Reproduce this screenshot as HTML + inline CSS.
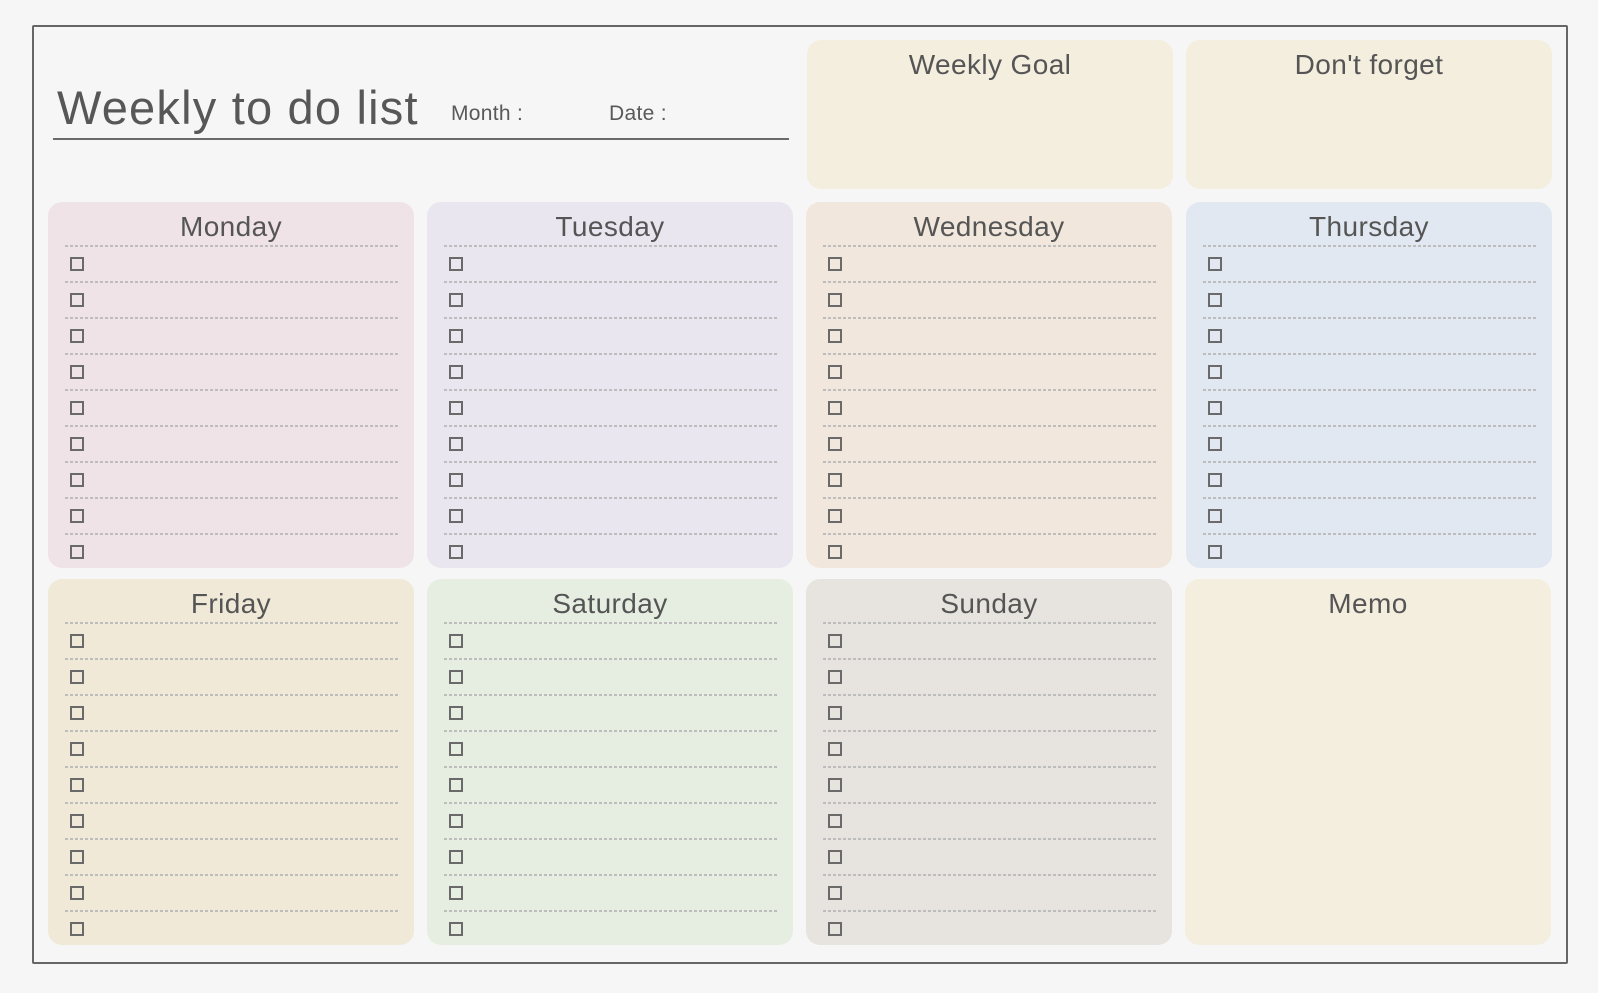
<!DOCTYPE html>
<html><head><meta charset="utf-8"><style>
*{margin:0;padding:0;box-sizing:border-box}
body{width:1598px;height:993px;background:#f6f6f6;position:relative;overflow:hidden;font-family:"Liberation Sans",sans-serif;color:#555}
.frame{position:absolute;left:32px;top:25px;width:1536px;height:939px;border:2px solid #666;border-radius:2px}
.title{position:absolute;left:57px;top:80px;font-size:47px;letter-spacing:1.2px;color:#575757}
.ul{position:absolute;left:53px;top:138px;width:736px;height:2px;background:#6a6a6a}
.lbl{position:absolute;top:102px;font-size:21px;color:#595959;letter-spacing:0.3px}
.card{position:absolute;width:366px;height:366px;border-radius:14px}
.card h2{position:absolute;left:0;right:0;top:9px;text-align:center;font-weight:normal;font-size:28px;letter-spacing:0.4px;color:#555}
.line{position:absolute;left:17px;right:16px;height:2px;background:repeating-linear-gradient(90deg,#bdbdbd 0 3px,transparent 3px 5px)}
.cb{position:absolute;left:22px;width:14px;height:14px;border:2px solid #6a6a6a}
</style></head><body>
<div class="frame"></div>
<div class="title">Weekly to do list</div>
<div class="ul"></div>
<div class="lbl" style="left:451px">Month :</div>
<div class="lbl" style="left:609px">Date :</div>
<div class="card" style="left:807px;top:40px;height:149px;background:#f4eedf"><h2 style="top:9px">Weekly Goal</h2></div>
<div class="card" style="left:1186px;top:40px;height:149px;background:#f4eedf"><h2 style="top:9px">Don't forget</h2></div>
<div class="card" style="left:1185px;top:579px;background:#f4eedf"><h2>Memo</h2></div>
<div id="days"></div>
<script>
var d=[["Monday",48,202,"#f0e3e8"],["Tuesday",427,202,"#e9e6ef"],["Wednesday",806,202,"#f1e7dc"],["Thursday",1186,202,"#e1e8f1"],["Friday",48,579,"#f0e9d8"],["Saturday",427,579,"#e6eee2"],["Sunday",806,579,"#e7e3df"]];
var h="";
d.forEach(function(c){
 h+='<div class="card" style="left:'+c[1]+'px;top:'+c[2]+'px;background:'+c[3]+'"><h2>'+c[0]+'</h2>';
 for(var i=0;i<9;i++){
  var y=43+i*36;
  h+='<div class="line" style="top:'+y+'px"></div>';
  h+='<div class="cb" style="top:'+(y+12)+'px"></div>';
 }
 h+='</div>';
});
document.getElementById("days").innerHTML=h;
</script>
</body></html>
